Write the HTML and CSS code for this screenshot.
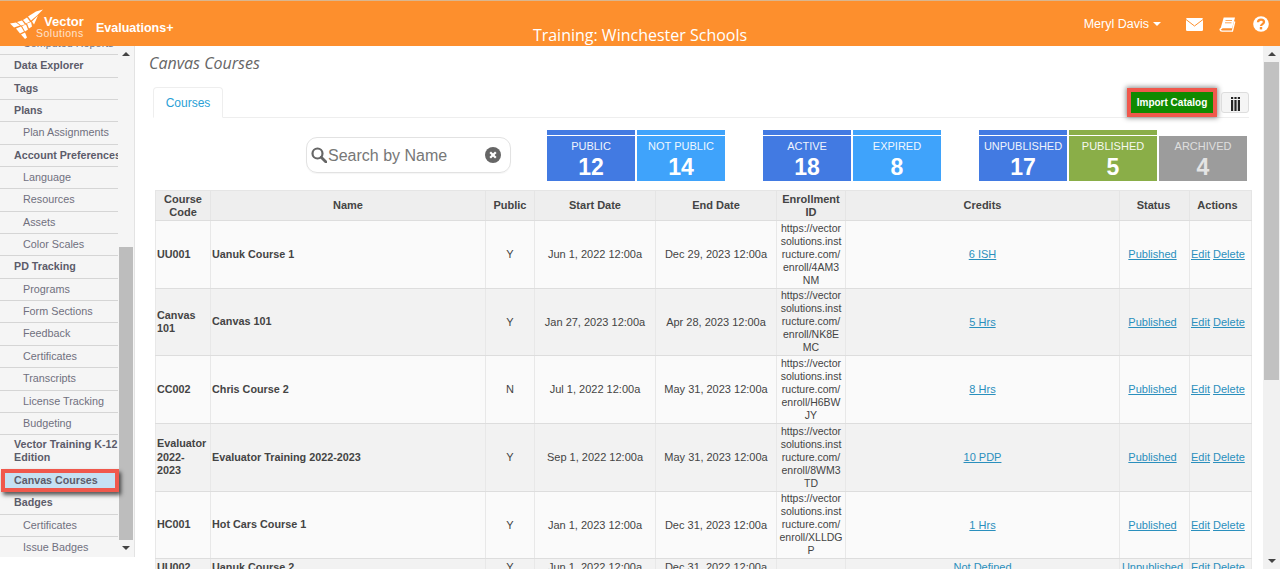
FILE: index.html
```html
<!DOCTYPE html>
<html lang="en">
<head>
<meta charset="utf-8">
<title>Canvas Courses</title>
<link rel="stylesheet" href="styles.css">
</head>
<body>
<header class="topbar">
  <div class="brand">
    <svg class="logo" viewBox="9 4.5 78 36" width="78" height="36" aria-hidden="true">
      <g fill="#fff">
        <polygon points="10,23 16,22 20,25 14,27"/>
        <polygon points="17,21.5 22,20 25,24 21,25"/>
        <polygon points="23,19.5 27,17 30,21 26,23"/>
        <polygon points="16,28 21,26 24,31 20,33"/>
        <polygon points="22,25.5 26,24 28,29 25,31"/>
        <polygon points="27,23 31,21.5 32,26 29,28"/>
        <polygon points="21,34 25,32 27,37 25,38.5"/>
        <polygon points="28,16 36,11 43,9 37,15 31,20"/>
        <polygon points="32,21 38,15 34,24"/>
      </g>
      <text class="logo-a" x="44" y="25.5">Vector</text>
      <text class="logo-b" x="36" y="36">Solutions</text>
    </svg>
    <span class="product">Evaluations+</span>
  </div>
  <div class="center-title">Training: Winchester Schools</div>
  <div class="user">
    <span class="user-name">Meryl Davis</span><span class="caret"></span>
    <svg class="ic-mail" viewBox="0 0 17 13" width="17" height="13" aria-hidden="true"><rect width="17" height="13" rx="1.2" fill="#fff"/><path fill="none" stroke="#fd8f2d" stroke-width="1" d="M0 1.500 8.500 8 17 1.500"/></svg>
    <svg class="ic-book" viewBox="0 0 17 15" width="17" height="15" aria-hidden="true"><path fill="none" stroke="#fff" stroke-width="1.400" d="M3.200 11.300C1.600 11.300 1 12 1.100 12.700c.1.800.8 1.400 1.900 1.400h10.400l2.300-9.600"/><path fill="#fff" d="M4.700.400h11.300l-2.800 10.900H3.200L1.700 11z"/><path fill="none" stroke="#fd8f2d" stroke-width=".8" d="M6.500 3.500h6.500M6 5.800h6.500"/></svg>
    <svg class="ic-help" viewBox="0 0 16 16" width="16" height="16" aria-hidden="true"><circle cx="8" cy="8" r="7.800" fill="#fff"/><path fill="none" stroke="#fd8f2d" stroke-width="2.300" d="M5 6.300C5 4.600 6.300 3.600 8 3.600c1.800 0 3 1 3 2.500 0 2-3 2-3 4"/><rect x="6.800" y="11" width="2.400" height="2.400" fill="#fd8f2d"/></svg>
  </div>
</header>
<div class="workspace">
  <aside class="sidebar">
    <nav class="nav">
      <a class="nav-sub">Computed Reports</a>
      <a class="nav-top">Data Explorer</a>
      <a class="nav-top">Tags</a>
      <a class="nav-top">Plans</a>
      <a class="nav-sub">Plan Assignments</a>
      <a class="nav-top">Account Preferences</a>
      <a class="nav-sub">Language</a>
      <a class="nav-sub">Resources</a>
      <a class="nav-sub">Assets</a>
      <a class="nav-sub">Color Scales</a>
      <a class="nav-top">PD Tracking</a>
      <a class="nav-sub">Programs</a>
      <a class="nav-sub">Form Sections</a>
      <a class="nav-sub">Feedback</a>
      <a class="nav-sub">Certificates</a>
      <a class="nav-sub">Transcripts</a>
      <a class="nav-sub">License Tracking</a>
      <a class="nav-sub">Budgeting</a>
      <a class="nav-top two-line">Vector Training K-12<br>Edition</a>
      <a class="nav-top current">Canvas Courses</a>
      <a class="nav-top">Badges</a>
      <a class="nav-sub">Certificates</a>
      <a class="nav-sub last">Issue Badges</a>
    </nav>
    <div class="side-scroll">
      <span class="arrow-up"></span>
      <span class="side-track"></span>
      <span class="side-thumb"></span>
      <span class="arrow-down"></span>
    </div>
  </aside>
  <main class="content">
    <h1 class="page-title">Canvas Courses</h1>
    <div class="tabs">
      <a class="tab">Courses</a>
      <div class="tab-actions">
        <button class="btn-import">Import Catalog</button>
        <button class="btn-cols" aria-label="Columns"><svg viewBox="0 0 9 14" width="9" height="14" aria-hidden="true"><g fill="#222"><rect x="0" y="3" width="2.200" height="11"/><rect x="3.400" y="3" width="2.200" height="11"/><rect x="6.800" y="3" width="2.200" height="11"/><rect x="0" y="0" width="2.200" height="2"/><rect x="3.400" y="0" width="2.200" height="2"/><rect x="6.800" y="0" width="2.200" height="2"/></g></svg></button>
      </div>
    </div>
    <div class="filters">
      <div class="search">
        <svg viewBox="0 0 16 16" width="16" height="16" aria-hidden="true"><circle cx="6.500" cy="6.500" r="5" fill="none" stroke="#666" stroke-width="2.200"/><path d="M10.200 10.200 15 15" stroke="#666" stroke-width="2.800" stroke-linecap="round"/></svg>
        <span class="search-text">Search by Name</span>
        <svg class="search-clear" viewBox="0 0 16 16" width="16" height="16" aria-hidden="true"><circle cx="8" cy="8" r="8" fill="#666"/><path d="M5.200 5.200l5.600 5.600M10.800 5.200l-5.600 5.600" stroke="#fff" stroke-width="2.200"/></svg>
      </div>
      <div class="stat-group g1">
        <div class="stat"><i class="bar blue"></i><div class="card blue"><span>PUBLIC</span><b>12</b></div></div>
        <div class="stat"><i class="bar sky"></i><div class="card sky"><span>NOT PUBLIC</span><b>14</b></div></div>
      </div>
      <div class="stat-group g2">
        <div class="stat"><i class="bar blue"></i><div class="card blue"><span>ACTIVE</span><b>18</b></div></div>
        <div class="stat"><i class="bar sky"></i><div class="card sky"><span>EXPIRED</span><b>8</b></div></div>
      </div>
      <div class="stat-group g3">
        <div class="stat"><i class="bar blue"></i><div class="card blue"><span>UNPUBLISHED</span><b>17</b></div></div>
        <div class="stat"><i class="bar green"></i><div class="card green"><span>PUBLISHED</span><b>5</b></div></div>
        <div class="stat"><i class="bar none"></i><div class="card grey"><span>ARCHIVED</span><b>4</b></div></div>
      </div>
    </div>
    <table class="courses">
      <colgroup><col class="c1"><col class="c2"><col class="c3"><col class="c4"><col class="c5"><col class="c6"><col class="c7"><col class="c8"><col class="c9"></colgroup>
      <thead>
        <tr><th>Course Code</th><th>Name</th><th>Public</th><th>Start Date</th><th>End Date</th><th>Enrollment ID</th><th>Credits</th><th>Status</th><th>Actions</th></tr>
      </thead>
      <tbody>
        <tr><td class="strong">UU001</td><td class="strong">Uanuk Course 1</td><td class="mid">Y</td><td class="mid">Jun 1, 2022 12:00a</td><td class="mid">Dec 29, 2023 12:00a</td><td class="enroll">https://vector solutions.inst ructure.com/ enroll/4AM3 NM</td><td class="mid"><a>6 ISH</a></td><td class="st"><a>Published</a></td><td class="acts"><a>Edit</a> <a>Delete</a></td></tr>
        <tr class="short"><td class="strong">Canvas 101</td><td class="strong">Canvas 101</td><td class="mid">Y</td><td class="mid">Jan 27, 2023 12:00a</td><td class="mid">Apr 28, 2023 12:00a</td><td class="enroll">https://vector solutions.inst ructure.com/ enroll/NK8E MC</td><td class="mid"><a>5 Hrs</a></td><td class="st"><a>Published</a></td><td class="acts"><a>Edit</a> <a>Delete</a></td></tr>
        <tr><td class="strong">CC002</td><td class="strong">Chris Course 2</td><td class="mid">N</td><td class="mid">Jul 1, 2022 12:00a</td><td class="mid">May 31, 2023 12:00a</td><td class="enroll">https://vector solutions.inst ructure.com/ enroll/H6BW JY</td><td class="mid"><a>8 Hrs</a></td><td class="st"><a>Published</a></td><td class="acts"><a>Edit</a> <a>Delete</a></td></tr>
        <tr><td class="strong">Evaluator 2022-2023</td><td class="strong">Evaluator Training 2022-2023</td><td class="mid">Y</td><td class="mid">Sep 1, 2022 12:00a</td><td class="mid">May 31, 2023 12:00a</td><td class="enroll">https://vector solutions.inst ructure.com/ enroll/8WM3 TD</td><td class="mid"><a>10 PDP</a></td><td class="st"><a>Published</a></td><td class="acts"><a>Edit</a> <a>Delete</a></td></tr>
        <tr class="short"><td class="strong">HC001</td><td class="strong">Hot Cars Course 1</td><td class="mid">Y</td><td class="mid">Jan 1, 2023 12:00a</td><td class="mid">Dec 31, 2023 12:00a</td><td class="enroll">https://vector solutions.inst ructure.com/ enroll/XLLDG P</td><td class="mid"><a>1 Hrs</a></td><td class="st"><a>Published</a></td><td class="acts"><a>Edit</a> <a>Delete</a></td></tr>
        <tr class="cutoff"><td class="strong">UU002</td><td class="strong">Uanuk Course 2</td><td class="mid">Y</td><td class="mid">Jun 1, 2022 12:00a</td><td class="mid">Dec 31, 2022 12:00a</td><td class="enroll"></td><td class="mid"><a>Not Defined</a></td><td class="st"><a>Unpublished</a></td><td class="acts"><a>Edit</a> <a>Delete</a></td></tr>
      </tbody>
    </table>
  </main>
  <div class="page-scroll">
    <span class="arrow-up"></span>
    <span class="page-thumb"></span>
    <span class="page-track"></span>
    <span class="arrow-down"></span>
  </div>
</div>
</body>
</html>
```
FILE: styles.css
```css
* { box-sizing: border-box; }
html, body { margin: 0; height: 100%; overflow: hidden; }
body { font-family: "Liberation Sans", Arial, sans-serif; font-size: 11px; color: #333; background: #fff; display: flex; flex-direction: column; }

.topbar { flex: 0 0 46px; background: #fd8f2d; border-top: 1px solid #d9b68f; display: flex; align-items: center; position: relative; color: #fff; z-index: 2; }
.brand { display: flex; align-items: center; padding-left: 9px; }
.logo { display: block; margin-top: -2px; }
.logo-a { font: bold 13px "Liberation Sans", sans-serif; fill: #fff; }
.logo-b { font: 10.5px "Liberation Sans", sans-serif; letter-spacing: .5px; fill: #fff; opacity: .75; }
.product { font-weight: bold; font-size: 12.5px; margin-left: 9px; margin-top: 9px; }
.center-title { position: absolute; left: 0; right: 0; top: 25px; text-align: center; font: 500 16px/19px "Open Sans", sans-serif; }
.user { margin-left: auto; display: flex; align-items: center; padding-right: 11px; margin-top: 1px; }
.user-name { font-size: 12.5px; }
.caret { width: 0; height: 0; border: 4px solid transparent; border-top-color: #fff; border-bottom: 0; margin-left: 4px; margin-right: 25px; }
.ic-book { margin-left: 16px; }
.ic-help { margin-left: 17px; }

.workspace { flex: 1; min-height: 0; display: flex; }

.sidebar { flex: 0 0 135px; height: 511px; display: flex; background: #f5f5f5; border-right: 1px solid #e3e3e3; overflow: hidden; }
.nav { width: 118px; margin-top: -13px; flex: none; }
.nav a { display: block; line-height: 21.35px; border-bottom: 1px solid #d5d5d5; overflow: hidden; white-space: nowrap; }
.nav-top { font-size: 10.7px; font-weight: bold; color: #5c5c6a; padding-left: 14px; }
.nav-sub { font-size: 10.8px; color: #70707e; padding-left: 23px; }
.nav .two-line { line-height: 13px; padding: 3px 0 3px 14px; border-bottom: 0; }
.nav .current { background: #c5e1f3; line-height: 15px; margin: 6px 0 4px 5px; padding-left: 9px; width: 110px; outline: 4px solid #f0584c; border: 0; box-shadow: 2px 3px 4px 4px rgba(0,0,0,.65); position: relative; z-index: 1; }
.nav .last { border-bottom: 0; }

.side-scroll { width: 15px; display: flex; flex-direction: column; align-items: center; padding-bottom: 1px; }
.side-track { flex: 1; }
.side-thumb { width: 14px; height: 293px; background: #bdbdbd; }
.arrow-up, .arrow-down { flex: none; width: 0; height: 0; border: 4px solid transparent; margin: 6px 0; }
.arrow-up { border-bottom: 4px solid #444; border-top: 0; }
.arrow-down { border-top: 4px solid #444; border-bottom: 0; }

.content { flex: 1; min-width: 0; height: 523px; overflow: hidden; padding: 0 12px 0 14px; }
.page-title { margin: 7px 0 0; font: italic 400 16px/20px "Open Sans", sans-serif; color: #666; }
.tabs { height: 31px; margin-top: 14px; margin-left: 4px; display: flex; border-bottom: 1px solid #eee; margin-right: 2px; }
.tab { width: 70px; height: 31px; border: 1px solid #eee; border-bottom-color: #fff; border-radius: 4px 4px 0 0; color: #2a9fd6; font-size: 12px; line-height: 31px; text-align: center; background: #fff; }
.tab-actions { margin-left: auto; display: flex; align-items: flex-start; padding-top: 5px; }
.btn-import { width: 82px; height: 21px; background: #108a00; color: #fff; font: bold 10px "Liberation Sans", sans-serif; border: 0; padding: 0; outline: 4px solid #f0584c; box-shadow: 0 0 5px 5px rgba(0,0,0,.45); }
.btn-cols { width: 28px; height: 21px; margin-left: 8px; background: #f5f5f5; border: 1px solid #ddd; border-radius: 3px; padding: 3px 0 0; line-height: 0; }

.filters { display: flex; height: 72px; }
.search { width: 205px; height: 36px; margin: 19px 0 0 157px; border: 1px solid #e2e2e2; border-radius: 11px; display: flex; align-items: center; padding: 0 9px 0 4px; box-shadow: 0 1px 1px rgba(0,0,0,.04); }
.search-text { font-size: 16px; color: #777; margin: 2px 0 0 1px; }
.search-clear { margin-left: auto; }
.stat-group { display: flex; gap: 2px; margin-top: 12px; }
.g1 { margin-left: 36px; }
.g2 { margin-left: 38px; }
.g3 { margin-left: 38px; }
.stat { width: 88px; }
.bar { display: block; height: 5px; margin-bottom: 1px; }
.card { height: 45px; color: #fff; text-align: center; padding-top: 4px; }
.card span { display: block; font-size: 11px; line-height: 13px; opacity: .92; }
.card b { display: block; font-size: 23px; line-height: 26px; margin-top: 1px; }
.blue { background: #427ae2; }
.sky { background: #3fa3fb; }
.green { background: #8aae48; }
.grey { background: #9c9c9c; color: #e4e4e4; }
.none { background: transparent; }

.courses { border-collapse: collapse; table-layout: fixed; width: 1096px; margin: 0 0 0 6px; font-size: 11px; color: #444; }
.c1 { width: 55px; } .c2 { width: 275px; } .c3 { width: 49px; } .c4 { width: 121px; } .c5 { width: 121px; } .c6 { width: 69px; } .c7 { width: 274px; } .c8 { width: 70px; } .c9 { width: 62px; }
.courses th { background: #eee; border: 1px solid #e5e5e5; border-bottom: 1px solid #ddd; height: 30px; padding: 0 4px; font-weight: bold; font-size: 11px; line-height: 12.5px; color: #444; }
.courses th:nth-child(8) { padding-right: 6px; }
.courses th:nth-child(9) { padding-right: 10px; }
.courses td { border: 1px solid #e8e8e8; border-bottom: 1px solid #ddd; padding: 0 1px 1px; height: 68px; background: #fafafa; vertical-align: middle; }
.courses .short td { height: 67px; }
.courses tbody tr:nth-child(even) td { background: #f2f2f2; }
.courses .strong { font-size: 10.8px; font-weight: bold; line-height: 13.5px; color: #444; padding-bottom: 0; }
.courses .strong:first-child { padding-right: 4px; }
.mid { text-align: center; }
.courses .st { text-align: center; padding-right: 5px; }
.courses .enroll { text-align: center; font-size: 10.5px; line-height: 13px; word-break: break-all; padding: 0 1px 1px; }
.courses a { color: #2a8fbd; text-decoration: underline; }
.courses .acts { text-align: center; white-space: nowrap; padding-right: 7px; }
.courses .cutoff td { height: 22px; vertical-align: top; padding-top: 2px; padding-bottom: 0; }

.page-scroll { flex: 0 0 17px; background: #f1f1f1; display: flex; flex-direction: column; align-items: center; }
.page-thumb { width: 15px; height: 318px; background: #c1c1c1; }
.page-track { flex: 1; }
```
